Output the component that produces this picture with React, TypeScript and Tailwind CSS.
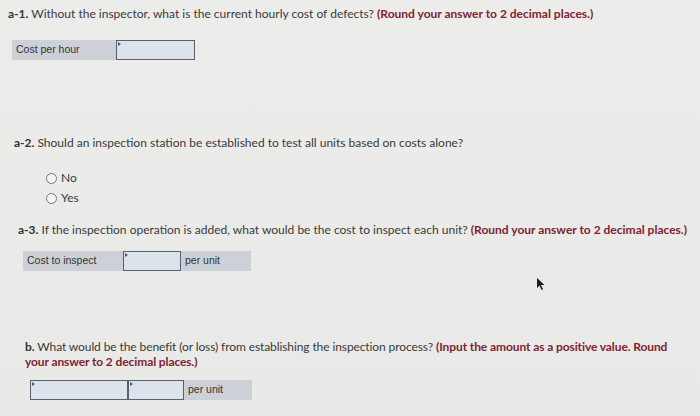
import React from 'react';

const Red: React.FC<{ children: React.ReactNode }> = ({ children }) => (
  <span className="font-bold text-[#7e2330]">{children}</span>
);

const Label: React.FC<{ text: string; w: string }> = ({ text, w }) => (
  <div
    className={`${w} flex h-[20px] items-center bg-[#cdd1d7] pl-[4px] text-[10.5px] text-[#333]`}
    style={{ fontFamily: '"Liberation Sans", Arial, sans-serif' }}
  >
    {text}
  </div>
);

const Input: React.FC<{ w: string }> = ({ w }) => (
  <div className={`${w} relative h-[20px] border border-[#59606b] bg-[#dde3ea]`}>
    <span className="absolute left-[1px] top-[1px] h-0 w-0 border-y-[2px] border-l-[3px] border-y-transparent border-l-[#3b5b9a]" />
  </div>
);

const Radio: React.FC<{ text: string }> = ({ text }) => (
  <div className="flex items-center gap-[4px]">
    <span className="h-[11px] w-[11px] rounded-full border border-[#777] bg-[#f4f4f3]" />
    <span>{text}</span>
  </div>
);

export default function App() {
  return (
    <div
      className="h-[416px] w-[700px] overflow-hidden bg-gradient-to-b from-[#ececeb] to-[#e9e9e8] text-[12px] text-[#3a3a3a]"
      style={{ fontFamily: 'Lato, "Noto Sans", sans-serif' }}
    >
      <div className="pl-[8px] pt-[6px] leading-[16px]">
        <b className="text-[#333]">a-1.</b> Without the inspector, what is the current hourly cost of defects?{' '}
        <Red>(Round your answer to 2 decimal places.)</Red>
      </div>
      <div className="ml-[12px] mt-[18px] flex">
        <Label text="Cost per hour" w="w-[104px]" />
        <Input w="w-[79px]" />
      </div>

      <div className="pl-[14px] pt-[75px] leading-[16px]">
        <b className="text-[#333]">a-2.</b> Should an inspection station be established to test all units based on costs alone?
      </div>
      <div className="ml-[46px] mt-[19px] flex flex-col gap-[4px] leading-[16px]">
        <Radio text="No" />
        <Radio text="Yes" />
      </div>

      <div className="pl-[18px] pt-[16px] leading-[16px]">
        <b className="text-[#333]">a-3.</b> If the inspection operation is added, what would be the cost to inspect each unit?{' '}
        <Red>(Round your answer to 2 decimal places.)</Red>
      </div>
      <div className="ml-[23px] mt-[13px] flex">
        <Label text="Cost to inspect" w="w-[100px]" />
        <Input w="w-[58px]" />
        <Label text="per unit" w="w-[70px]" />
      </div>

      <div className="relative h-[68px]">
        <svg className="absolute left-[536px] top-[6px]" width="10" height="14" viewBox="0 0 10 14">
          <path d="M1 1 L1 11 L3.5 8.5 L5.5 13 L7 12.3 L5 8 L8.5 8 Z" fill="#1c1c1c" />
        </svg>
      </div>

      <div className="pl-[25px] leading-[15px] tracking-[-0.1px]">
        <b className="text-[#333]">b.</b> What would be the benefit (or loss) from establishing the inspection process?{' '}
        <Red>
          (Input the amount as a positive value. Round
          <br />
          your answer to 2 decimal places.)
        </Red>
      </div>
      <div className="ml-[30px] mt-[11px] flex">
        <Input w="w-[98px]" />
        <Input w="w-[56px]" />
        <Label text="per unit" w="w-[68px]" />
      </div>
    </div>
  );
}
